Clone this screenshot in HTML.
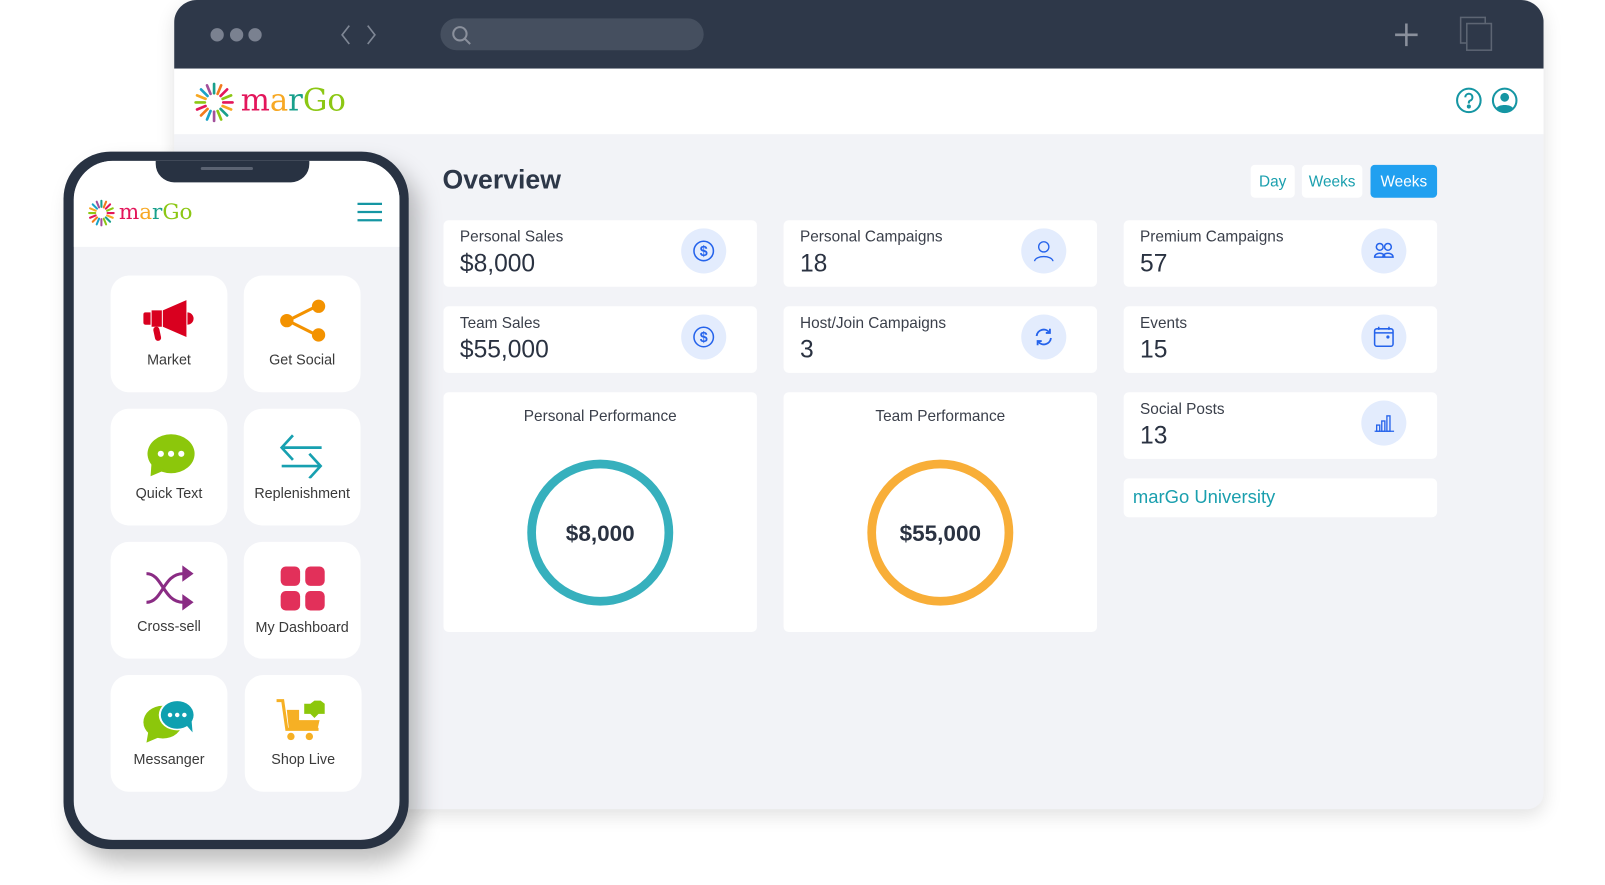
<!DOCTYPE html>
<html><head><meta charset="utf-8"><style>
*{margin:0;padding:0;box-sizing:border-box}
html,body{width:1605px;height:885px;overflow:hidden;background:#fff;font-family:"Liberation Sans",Roboto,sans-serif}
#w{position:absolute;left:0;top:0;width:1567px;height:864px;transform:scale(1.0243);transform-origin:0 0}
.abs{position:absolute}
.browser{left:170px;top:0;width:1337px;height:790px;border-radius:22px 22px 16px 8px;overflow:hidden;background:#f2f3f7;box-shadow:0 6px 18px rgba(0,0,0,.12)}
.tb{left:0;top:0;width:100%;height:67px;background:#2e3849}
.hd{left:0;top:67px;width:100%;height:64px;background:#fff}
.card{position:absolute;background:#fff;border-radius:5px}
.lbl{position:absolute;left:16px;top:8px;font-size:15px;color:#3a3f4a}
.val{position:absolute;left:16px;top:29px;font-size:24px;color:#2a3241}
.ic{position:absolute;right:30px;top:8px;width:44px;height:44px;border-radius:50%;background:#e3ecfd;display:flex;align-items:center;justify-content:center}
.btn{position:absolute;top:161px;height:32px;border-radius:4px;background:#fff;color:#1a9fae;font-size:15px;display:flex;align-items:center;justify-content:center}
.phone{left:62px;top:148px;width:337px;height:681px;border-radius:46px;background:#283242;box-shadow:10px 14px 22px rgba(0,0,0,.25)}
.scr{left:10px;top:9px;width:318px;height:663px;border-radius:38px;background:#f2f3f7;overflow:hidden}
.tile{position:absolute;width:114px;height:114px;background:#fff;border-radius:18px;text-align:center;font-size:14px;color:#3a3a3a}
.tile span{position:absolute;left:0;right:0;top:74px}
.tile svg{position:absolute;left:29px;top:22px}
.logo{font-family:"DejaVu Serif",serif;letter-spacing:0px}
</style></head><body><div id="w">
<div class="abs browser">
 <div class="abs tb">
  <svg class="abs" style="left:30px;top:24px" width="60" height="20"><circle cx="12" cy="10" r="6.5" fill="#7a8190"/><circle cx="31" cy="10" r="6.5" fill="#7a8190"/><circle cx="49" cy="10" r="6.5" fill="#7a8190"/></svg>
  <svg class="abs" style="left:160px;top:22px" width="40" height="24" fill="none" stroke="#7f8795" stroke-width="1.6"><path d="M11 3 4 12 11 21M29 3 36 12 29 21"/></svg>
  <div class="abs" style="left:260px;top:18px;width:257px;height:31px;border-radius:16px;background:#454f5f"></div>
  <svg class="abs" style="left:270px;top:24px" width="22" height="22" fill="none" stroke="#8a909c" stroke-width="2"><circle cx="9" cy="9" r="6.5"/><path d="M14 14 19 19"/></svg>
  <svg class="abs" style="left:1190px;top:21px" width="26" height="26" stroke="#8a909c" stroke-width="2.5"><path d="M13 2V24M2 13H24"/></svg>
  <svg class="abs" style="left:1254px;top:15px" width="34" height="36" fill="none" stroke="#5d6573" stroke-width="1.5"><rect x="2" y="2" width="24" height="25"/><rect x="8" y="8" width="24" height="26" fill="#2e3849"/></svg>
 </div>
 <div class="abs hd">
  <svg class="abs" style="left:19px;top:13px" width="40" height="40" id="sun"></svg>
  <div class="abs logo" style="left:65px;top:14px;font-size:30px;line-height:36px"><span style="color:#e3165b">m</span><span style="color:#f7a823">a</span><span style="color:#19a08c">r</span><span style="color:#8cc714">Go</span></div>
  <svg class="abs" style="left:1251px;top:18px" width="28" height="28" fill="none" stroke="#1596a3" stroke-width="2"><circle cx="13" cy="13" r="11.5"/><path d="M9.5 10a3.5 3.5 0 1 1 4.5 3.4c-.8.3-1 1-1 2v.6" stroke-width="2"/><circle cx="13" cy="19" r="1" fill="#1596a3"/></svg>
  <svg class="abs" style="left:1286px;top:18px" width="28" height="28"><circle cx="13" cy="13" r="11.5" fill="none" stroke="#1596a3" stroke-width="2"/><circle cx="13" cy="10" r="4.3" fill="#1596a3"/><path d="M5 20.5c2-4 14-4 16 0a11 11 0 0 1-16 0z" fill="#1596a3"/></svg>
 </div>
</div>
<div class="abs" style="left:432px;top:160px;font-size:26px;font-weight:bold;color:#2d3748">Overview</div>
<div class="btn" style="left:1221px;width:43px">Day</div>
<div class="btn" style="left:1271px;width:59px">Weeks</div>
<div class="btn" style="left:1338px;width:65px;background:#21a0f0;color:#fff">Weeks</div>

<div class="card" style="left:433px;top:215px;width:306px;height:65px"><div class="lbl">Personal Sales</div><div class="val">$8,000</div><div class="ic"><svg width="24" height="24" fill="none" stroke="#2563eb" stroke-width="1.5"><circle cx="12" cy="12" r="9.5"/><text x="12" y="17" font-size="14" font-weight="bold" text-anchor="middle" fill="#2563eb" stroke="none" font-family="Liberation Sans">$</text></svg></div></div>
<div class="card" style="left:765px;top:215px;width:306px;height:65px"><div class="lbl">Personal Campaigns</div><div class="val">18</div><div class="ic"><svg width="24" height="24" fill="none" stroke="#2563eb" stroke-width="1.3"><circle cx="12" cy="8" r="5"/><path d="M3 22c1-6 17-6 18 0"/></svg></div></div>
<div class="card" style="left:1097px;top:215px;width:306px;height:65px"><div class="lbl">Premium Campaigns</div><div class="val">57</div><div class="ic"><svg width="24" height="24" fill="none" stroke="#2563eb" stroke-width="1.5"><circle cx="8" cy="8" r="3.3"/><circle cx="16" cy="8" r="3.3"/><path d="M3 18c0-5 10-5 10 0zM11 18c0-5 10-5 10 0z"/></svg></div></div>
<div class="card" style="left:433px;top:299px;width:306px;height:65px"><div class="lbl">Team Sales</div><div class="val">$55,000</div><div class="ic"><svg width="24" height="24" fill="none" stroke="#2563eb" stroke-width="1.5"><circle cx="12" cy="12" r="9.5"/><text x="12" y="17" font-size="14" font-weight="bold" text-anchor="middle" fill="#2563eb" stroke="none" font-family="Liberation Sans">$</text></svg></div></div>
<div class="card" style="left:765px;top:299px;width:306px;height:65px"><div class="lbl">Host/Join Campaigns</div><div class="val">3</div><div class="ic"><svg width="24" height="24" fill="none" stroke="#2563eb" stroke-width="1.8"><path d="M5 11a7 7 0 0 1 12.5-3.5M19 13a7 7 0 0 1-12.5 3.5"/><path d="M18 4v4h-4M6 20v-4h4"/></svg></div></div>
<div class="card" style="left:1097px;top:299px;width:306px;height:65px"><div class="lbl">Events</div><div class="val">15</div><div class="ic"><svg width="24" height="24" fill="none" stroke="#2563eb" stroke-width="1.5"><rect x="3" y="4" width="18" height="17" rx="2"/><path d="M3 8h18M7 2v3M17 2v3"/><circle cx="16" cy="12" r=".8" fill="#2563eb"/></svg></div></div>
<div class="card" style="left:1097px;top:383px;width:306px;height:65px"><div class="lbl">Social Posts</div><div class="val">13</div><div class="ic"><svg width="24" height="24" fill="none" stroke="#2563eb" stroke-width="1.3"><path d="M3 20h19"/><rect x="5" y="14" width="3" height="6"/><rect x="10" y="10" width="3" height="10"/><rect x="15" y="5" width="3" height="15"/></svg></div></div>
<div class="card" style="left:1097px;top:467px;width:306px;height:38px"><div style="position:absolute;left:9px;top:8px;font-size:18px;color:#1a9fae">marGo University</div></div>

<div class="card" style="left:433px;top:383px;width:306px;height:234px"><div style="position:absolute;top:15px;width:100%;text-align:center;font-size:15px;color:#3a3f4a">Personal Performance</div>
<svg style="position:absolute;left:80px;top:65px" width="146" height="146"><circle cx="73" cy="72" r="67" fill="none" stroke="#36b0bd" stroke-width="8.5"/><text x="73" y="80" text-anchor="middle" font-size="22" font-weight="bold" fill="#2a3241" font-family="Liberation Sans">$8,000</text></svg></div>
<div class="card" style="left:765px;top:383px;width:306px;height:234px"><div style="position:absolute;top:15px;width:100%;text-align:center;font-size:15px;color:#3a3f4a">Team Performance</div>
<svg style="position:absolute;left:80px;top:65px" width="146" height="146"><circle cx="73" cy="72" r="67" fill="none" stroke="#f8ae38" stroke-width="8.5"/><text x="73" y="80" text-anchor="middle" font-size="22" font-weight="bold" fill="#2a3241" font-family="Liberation Sans">$55,000</text></svg></div>

<div class="abs phone"><div class="abs scr">
 <div class="abs" style="left:0;top:0;width:318px;height:84px;background:#fff"></div>
 <div class="abs" style="left:80px;top:-2px;width:150px;height:23px;background:#283242;border-radius:0 0 18px 18px"></div>
 <div class="abs" style="left:124px;top:6px;width:51px;height:3px;border-radius:2px;background:#5b6372"></div>
 <svg class="abs" style="left:13px;top:37px" width="28" height="28" id="sun2"></svg>
 <div class="abs logo" style="left:44px;top:37px;font-size:21px;line-height:26px"><span style="color:#e3165b">m</span><span style="color:#f7a823">a</span><span style="color:#19a08c">r</span><span style="color:#8cc714">Go</span></div>
 <svg class="abs" style="left:277px;top:40px" width="24" height="20" stroke="#1596a3" stroke-width="2.2"><path d="M0 2H24M0 10H24M0 18H24"/></svg>

 <div class="tile" style="left:36px;top:112px"><svg width="56" height="46"><path d="M5 14h5v12H5a2 2 0 0 1-2-2v-8a2 2 0 0 1 2-2z" fill="#d9001f"/><rect x="11" y="12" width="10" height="16" fill="#d9001f"/><path d="M22 12 45 2v36L22 28z" fill="#d9001f"/><path d="M46 14a3 3 0 0 1 0 12z" fill="#d9001f"/><rect x="12" y="28" width="6" height="14" rx="3" fill="#d9001f" transform="rotate(-12 15 28)"/></svg><span>Market</span></div>
 <div class="tile" style="left:166px;top:112px"><svg width="56" height="46"><path d="M42 8 14 22 42 36" fill="none" stroke="#f39200" stroke-width="3"/><circle cx="44" cy="8" r="6.5" fill="#f39200"/><circle cx="13" cy="22" r="6.5" fill="#f39200"/><circle cx="44" cy="36" r="6.5" fill="#f39200"/></svg><span>Get Social</span></div>
 <div class="tile" style="left:36px;top:242px"><svg width="56" height="46"><ellipse cx="30" cy="22" rx="23" ry="19" fill="#8cc70b"/><path d="M11 30 10 44 24 38z" fill="#8cc70b"/><circle cx="20" cy="22" r="3" fill="#fff"/><circle cx="30" cy="22" r="3" fill="#fff"/><circle cx="40" cy="22" r="3" fill="#fff"/></svg><span>Quick Text</span></div>
 <div class="tile" style="left:166px;top:242px"><svg width="56" height="46" fill="none" stroke="#17a0b0" stroke-width="2.6"><path d="M47 16H10M19 4 8 16 19 28M8 34H45M35 22 46 34 35 46"/></svg><span>Replenishment</span></div>
 <div class="tile" style="left:36px;top:372px"><svg width="56" height="46" fill="none" stroke="#8a2c84" stroke-width="3"><path d="M6 9c16 0 16 28 36 28M6 37c16 0 16-28 36-28"/><path d="M41 1 52 9 41 17z M41 29 52 37 41 45z" fill="#8a2c84" stroke="none"/></svg><span>Cross-sell</span></div>
 <div class="tile" style="left:166px;top:372px"><svg width="56" height="46" fill="#e2305a"><rect x="7" y="2" width="19" height="19" rx="5"/><rect x="31" y="2" width="19" height="19" rx="5"/><rect x="7" y="26" width="19" height="19" rx="5"/><rect x="31" y="26" width="19" height="19" rx="5"/></svg><span style="top:75px">My Dashboard</span></div>
 <div class="tile" style="left:36px;top:502px"><svg width="56" height="46"><ellipse cx="22" cy="24" rx="19" ry="16" fill="#8cc70b"/><path d="M8 32 6 44 20 38z" fill="#8cc70b"/><ellipse cx="36" cy="17" rx="18" ry="15" fill="#fff"/><ellipse cx="36" cy="17" rx="16" ry="13.5" fill="#0fa0b0"/><path d="M44 26 51 34 50 22z" fill="#0fa0b0"/><circle cx="29" cy="17" r="2.2" fill="#fff"/><circle cx="36" cy="17" r="2.2" fill="#fff"/><circle cx="43" cy="17" r="2.2" fill="#fff"/></svg><span>Messanger</span></div>
 <div class="tile" style="left:167px;top:502px"><svg width="60" height="46"><path d="M2 3h6l4 28h31" fill="none" stroke="#f6b024" stroke-width="3"/><path d="M12 12h12v10h20l-2 9H14z" fill="#f6b024"/><circle cx="16" cy="38" r="3.6" fill="#f6b024"/><circle cx="34" cy="38" r="3.6" fill="#f6b024"/><path d="M29 6h6l4-3 6 0 4 3v10h-6l-4 4-4-4h-6z" fill="#8cc70b"/></svg><span>Shop Live</span></div>
</div></div>
</div>
<script>
function sun(id,R,r0,w){var s=document.getElementById(id);var c=['#e3165b','#f7a823','#19a08c','#8cc714','#a3509b','#1aa3c7','#f27b1d','#e3165b','#8cc714','#f7a823','#1aa3c7','#a3509b','#19a08c','#f27b1d','#e3165b','#8cc714'];var h='';var cx=R+2,cy=R+2;for(var i=0;i<16;i++){var a=i*Math.PI/8;var x1=cx+Math.cos(a)*r0,y1=cy+Math.sin(a)*r0,x2=cx+Math.cos(a)*R,y2=cy+Math.sin(a)*R;h+='<line x1="'+x1+'" y1="'+y1+'" x2="'+x2+'" y2="'+y2+'" stroke="'+c[i]+'" stroke-width="'+w+'" stroke-linecap="round"/>';}s.innerHTML=h;}
sun('sun',18,9,2.6);sun('sun2',12,6,2);
</script>
</body></html>
